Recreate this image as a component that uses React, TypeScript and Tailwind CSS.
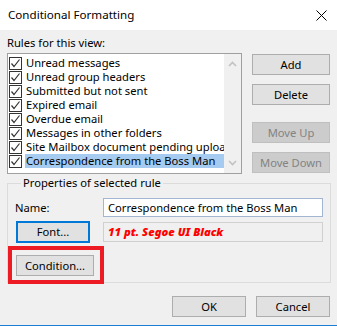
import type { ReactNode } from 'react';

const rules = [
  'Unread messages',
  'Unread group headers',
  'Submitted but not sent',
  'Expired email',
  'Overdue email',
  'Messages in other folders',
  'Site Mailbox document pending upload',
  'Correspondence from the Boss Man',
];

function CheckBox() {
  return (
    <span className="flex h-[13px] w-[13px] shrink-0 items-center justify-center border border-[#333333] bg-white">
      <svg width="11" height="11" viewBox="0 0 11 11" fill="none">
        <path d="M1.5 5.5 L4 8.5 L9.5 1.5" stroke="#333333" strokeWidth="1.2" />
      </svg>
    </span>
  );
}

function Button({
  children,
  disabled = false,
  focused = false,
  className = '',
}: {
  children: ReactNode;
  disabled?: boolean;
  focused?: boolean;
  className?: string;
}) {
  const tone = disabled
    ? 'border border-[#bfbfbf] bg-[#cccccc] text-[#838383]'
    : focused
      ? 'border-2 border-[#0078d7] bg-[#e1e1e1] text-black'
      : 'border border-[#adadad] bg-[#e1e1e1] text-black';
  return (
    <button type="button" className={`flex items-center justify-center leading-none ${tone} ${className}`}>
      {children}
    </button>
  );
}

export default function App() {
  return (
    <div className="flex h-[326px] w-[337px] flex-col border-b border-[#1a7fd4] bg-[#f0f0f0] text-[11.2px] leading-[14px] text-black [font-family:'Noto_Sans',sans-serif]">
      <div className="flex h-[30px] shrink-0 items-center justify-between bg-white pl-[8px] pr-[10px]">
        <span className="text-[11.6px]">Conditional Formatting</span>
        <svg width="11" height="11" viewBox="0 0 11 11">
          <path d="M0.5 0.5 L10.5 10.5 M10.5 0.5 L0.5 10.5" stroke="#000" strokeWidth="1" />
        </svg>
      </div>

      <div className="flex flex-1 flex-col pl-[7px] pr-[7px]">
        <div className="pt-[6px]">Rules for this view:</div>

        <div className="mt-[3px] flex">
          <div className="flex h-[121px] w-[235px] border border-[#a0a0a0] bg-white">
            <div className="flex min-w-0 flex-1 flex-col pt-[2px] pl-[1px]">
              {rules.map((rule, i) => (
                <div key={rule} className="flex h-[14px] items-center">
                  <CheckBox />
                  <span
                    className={`ml-[3px] flex h-[14px] min-w-0 flex-1 items-center overflow-hidden whitespace-nowrap pl-[1px] ${
                      i === rules.length - 1 ? 'bg-[#a6cbf0]' : ''
                    }`}
                  >
                    {rule}
                  </span>
                </div>
              ))}
            </div>
            <div className="flex w-[17px] shrink-0 flex-col items-center justify-between bg-[#f0f0f0] py-[7px]">
              <svg width="9" height="6" viewBox="0 0 9 6" fill="none">
                <path d="M1 5 L4.5 1.5 L8 5" stroke="#c2c2c2" strokeWidth="1.6" />
              </svg>
              <svg width="9" height="6" viewBox="0 0 9 6" fill="none">
                <path d="M1 1 L4.5 4.5 L8 1" stroke="#c2c2c2" strokeWidth="1.6" />
              </svg>
            </div>
          </div>

          <div className="ml-[10px] flex flex-col pt-[1px]">
            <Button className="h-[21px] w-[78px]">Add</Button>
            <Button className="mt-[9px] h-[21px] w-[78px]">Delete</Button>
            <Button disabled className="mt-[17px] h-[21px] w-[78px]">
              Move Up
            </Button>
            <Button disabled className="mt-[9px] h-[21px] w-[78px]">
              Move Down
            </Button>
          </div>
        </div>

        <fieldset className="mt-[2px] w-[324px] border border-[#dcdcdc] pb-[6px] pl-[7px]">
          <legend className="ml-[6px] px-[2px]">Properties of selected rule</legend>

          <div className="mt-[8px] flex items-center">
            <span className="w-[88px]">Name:</span>
            <div className="flex h-[19px] w-[220px] items-center whitespace-nowrap border border-[#a2b6d1] bg-white pl-[4px]">
              Correspondence from the Boss Man
            </div>
          </div>

          <div className="mt-[4px] flex items-center">
            <Button focused className="ml-[1px] h-[22px] w-[74px]">
              Font...
            </Button>
            <div className="ml-[13px] flex h-[20px] w-[220px] items-center border border-[#d0d0d0] bg-[#f0f0f0] pl-[4px] font-black italic text-[#ff0000]">
              11 pt. Segoe UI Black
            </div>
          </div>

          <div className="relative ml-[1px] mt-[12px] w-[78px]">
            <Button className="h-[21px] w-[78px]">Condition...</Button>
            <div className="pointer-events-none absolute left-[-8px] top-[-9px] h-[38px] w-[96px] border-4 border-[#ed1c24]" />
          </div>
        </fieldset>

        <div className="mt-[13px] flex justify-end gap-[10px]">
          <Button className="h-[21px] w-[74px]">OK</Button>
          <Button className="h-[21px] w-[74px]">Cancel</Button>
        </div>
      </div>
    </div>
  );
}
